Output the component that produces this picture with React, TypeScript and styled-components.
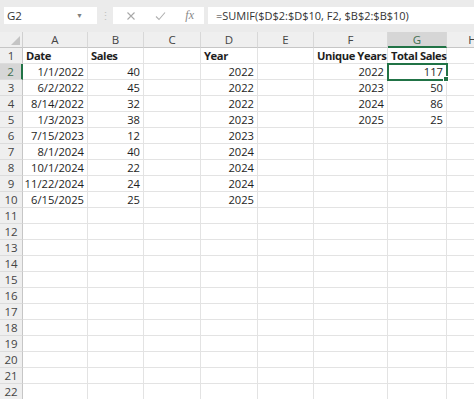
import styled, { createGlobalStyle } from "styled-components";

const GlobalStyle = createGlobalStyle`
  body {
    margin: 0;
    background: #ffffff;
  }
`;

const COLUMNS = ["A", "B", "C", "D", "E", "F", "G", "H"];
const WIDTHS = [65, 56, 57, 57, 56, 74, 59, 52];

type CellData = { text: string; bold?: boolean; right?: boolean };

const t = (text: string): CellData => ({ text, right: true });
const h = (text: string): CellData => ({ text, bold: true });
const e: CellData = { text: "" };

const DATA: CellData[][] = [
  [h("Date"), h("Sales"), e, h("Year"), e, h("Unique Years"), h("Total Sales")],
  [t("1/1/2022"), t("40"), e, t("2022"), e, t("2022"), t("117")],
  [t("6/2/2022"), t("45"), e, t("2022"), e, t("2023"), t("50")],
  [t("8/14/2022"), t("32"), e, t("2022"), e, t("2024"), t("86")],
  [t("1/3/2023"), t("38"), e, t("2023"), e, t("2025"), t("25")],
  [t("7/15/2023"), t("12"), e, t("2023")],
  [t("8/1/2024"), t("40"), e, t("2024")],
  [t("10/1/2024"), t("22"), e, t("2024")],
  [t("11/22/2024"), t("24"), e, t("2024")],
  [t("6/15/2025"), t("25"), e, t("2025")],
];

const ROW_COUNT = 22;
const SELECTED = { row: 2, col: 6 };

const Shell = styled.div`
  width: 474px;
  height: 399px;
  overflow: hidden;
  background: #ebebeb;
  font-family: "Open Sans", "Noto Sans", sans-serif;
`;

const Toolbar = styled.div`
  display: flex;
  align-items: stretch;
  height: 17px;
  padding: 7px 0 8px 4px;
`;

const NameBox = styled.div`
  width: 93px;
  background: #ffffff;
  display: flex;
  align-items: center;
  justify-content: space-between;
  padding: 0 14px 0 3px;
  box-sizing: border-box;
  font-size: 11.5px;
  color: #333;
`;

const Caret = styled.span`
  font-size: 7px;
  color: #808080;
`;

const Grip = styled.div`
  width: 16px;
  display: flex;
  justify-content: center;
  align-items: center;
  color: #c2c2c2;
  font-size: 11px;
`;

const FxBox = styled.div`
  width: 91px;
  background: #ffffff;
  display: flex;
  align-items: center;
  justify-content: space-between;
  padding: 0 10px 0 13px;
  box-sizing: border-box;
  margin-right: 4px;
  color: #a8a8a8;
`;

const FxText = styled.span`
  font-family: "Liberation Serif", serif;
  font-style: italic;
  font-size: 12px;
  color: #888;
`;

const FormulaInput = styled.div`
  flex: 1;
  background: #ffffff;
  display: flex;
  align-items: center;
  padding-left: 8px;
  font-size: 11px;
  color: #333;
  white-space: nowrap;
  overflow: hidden;
`;

const Sheet = styled.div`
  display: grid;
  grid-template-columns: 23px ${WIDTHS.map((w) => `${w}px`).join(" ")};
  grid-auto-rows: 16px;
  background: #ffffff;
`;

const Corner = styled.div`
  position: relative;
  background: #efefef;
  border-right: 1px solid #d0d0d0;
  border-bottom: 1px solid #c6c6c6;
  box-sizing: border-box;

  &::after {
    content: "";
    position: absolute;
    right: 2px;
    bottom: 2px;
    border-left: 9px solid transparent;
    border-bottom: 9px solid #c4c4c4;
  }
`;

const ColHead = styled.div<{ $active?: boolean }>`
  background: ${(p) => (p.$active ? "#d6d6d6" : "#efefef")};
  border-right: 1px solid #d8d8d8;
  border-bottom: ${(p) => (p.$active ? "2px solid #217346" : "1px solid #c6c6c6")};
  box-sizing: border-box;
  display: flex;
  align-items: center;
  justify-content: center;
  font-size: 11.5px;
  color: ${(p) => (p.$active ? "#3f6e4f" : "#444")};
`;

const RowHead = styled.div<{ $active?: boolean }>`
  background: ${(p) => (p.$active ? "#d6d6d6" : "#efefef")};
  border-right: ${(p) => (p.$active ? "2px solid #217346" : "1px solid #c6c6c6")};
  border-bottom: 1px solid #dcdcdc;
  box-sizing: border-box;
  display: flex;
  align-items: center;
  justify-content: center;
  font-size: 11.5px;
  color: ${(p) => (p.$active ? "#3f6e4f" : "#444")};
`;

const Cell = styled.div<{ $right?: boolean; $bold?: boolean; $selected?: boolean }>`
  position: relative;
  border-right: 1px solid #e3e3e3;
  border-bottom: 1px solid #e3e3e3;
  box-sizing: border-box;
  display: flex;
  align-items: center;
  justify-content: ${(p) => (p.$right ? "flex-end" : "flex-start")};
  padding: 0 3px;
  font-size: 11.2px;
  font-weight: ${(p) => (p.$bold ? 700 : 400)};
  letter-spacing: ${(p) => (p.$bold ? "-0.4px" : "0")};
  color: #1e1e1e;
  white-space: nowrap;
  overflow: visible;
  outline: ${(p) => (p.$selected ? "2px solid #217346" : "none")};
  outline-offset: -1px;
  z-index: ${(p) => (p.$selected ? 1 : 0)};

  ${(p) =>
    p.$selected &&
    `
    &::after {
      content: "";
      position: absolute;
      right: -3px;
      bottom: -3px;
      width: 4px;
      height: 4px;
      background: #217346;
      border: 1px solid #ffffff;
    }
  `}
`;

const CrossIcon = () => (
  <svg width="10" height="10" viewBox="0 0 10 10">
    <path d="M1.5 1.5 L8.5 8.5 M8.5 1.5 L1.5 8.5" stroke="#a8a8a8" strokeWidth="1.1" fill="none" />
  </svg>
);

const CheckIcon = () => (
  <svg width="11" height="10" viewBox="0 0 11 10">
    <path d="M1 5.5 L4 8.5 L10 1.5" stroke="#b0b0b0" strokeWidth="1.1" fill="none" />
  </svg>
);

export default function App() {
  const rows = Array.from({ length: ROW_COUNT }, (_, i) => i + 1);

  return (
    <Shell>
      <GlobalStyle />
      <Toolbar>
        <NameBox>
          G2
          <Caret>▼</Caret>
        </NameBox>
        <Grip>⋮</Grip>
        <FxBox>
          <CrossIcon />
          <CheckIcon />
          <FxText>fx</FxText>
        </FxBox>
        <FormulaInput>=SUMIF($D$2:$D$10, F2, $B$2:$B$10)</FormulaInput>
      </Toolbar>
      <Sheet>
        <Corner />
        {COLUMNS.map((c, i) => (
          <ColHead key={c} $active={i === SELECTED.col}>
            {c}
          </ColHead>
        ))}
        {rows.map((r) => (
          <Row key={r} row={r} />
        ))}
      </Sheet>
    </Shell>
  );
}

function Row({ row }: { row: number }) {
  const values = DATA[row - 1] || [];
  return (
    <>
      <RowHead $active={row === SELECTED.row}>{row}</RowHead>
      {COLUMNS.map((c, i) => {
        const v = values[i] || e;
        return (
          <Cell
            key={c}
            $right={v.right}
            $bold={v.bold}
            $selected={row === SELECTED.row && i === SELECTED.col}
          >
            {v.text}
          </Cell>
        );
      })}
    </>
  );
}
